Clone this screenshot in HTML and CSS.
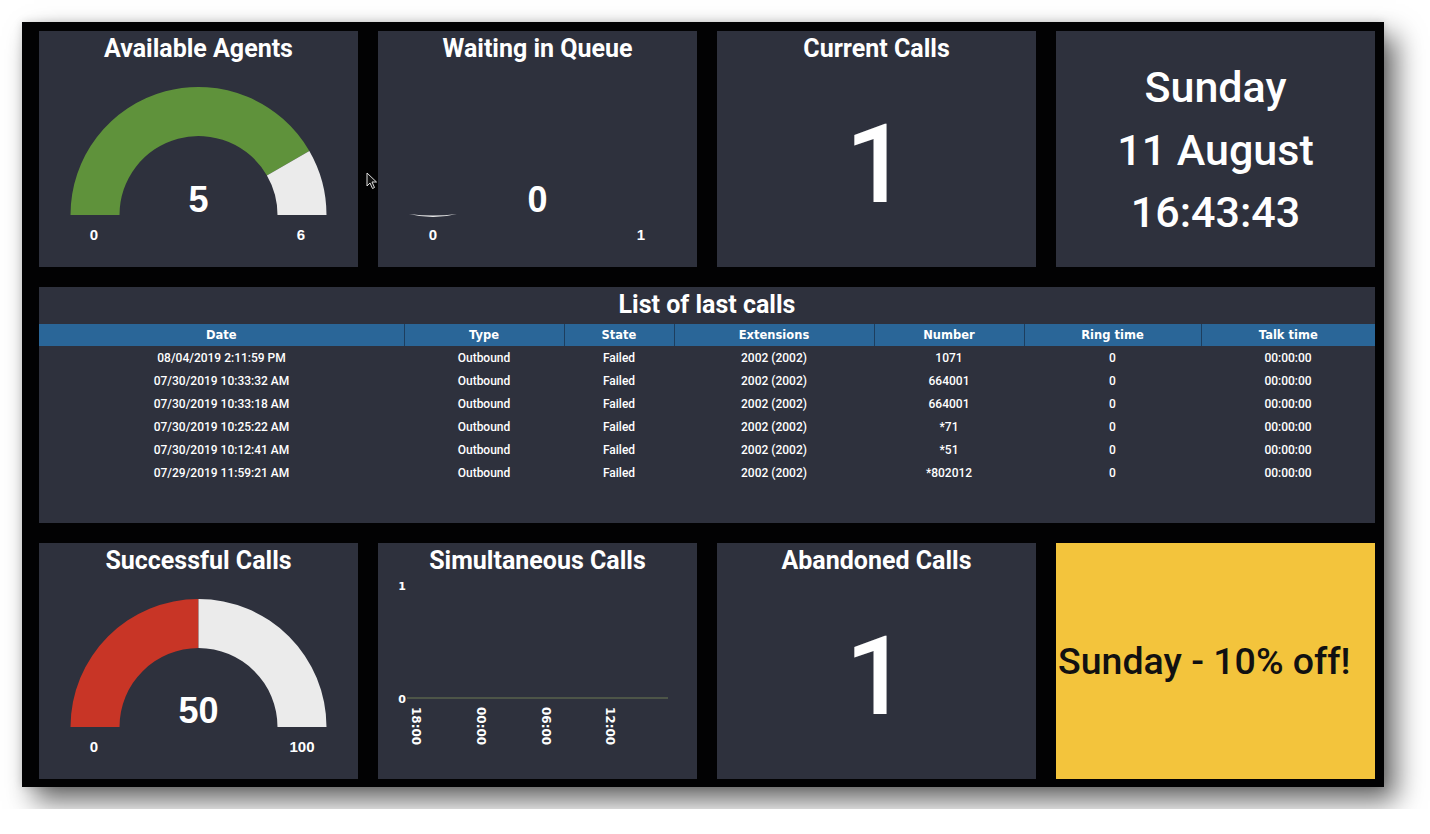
FILE: index.html
```html
<!DOCTYPE html>
<html lang="en">
<head>
<meta charset="utf-8">
<title>Call Center Dashboard</title>
<link rel="stylesheet" href="styles.css">
</head>
<body>
<div class="frame">
  <section class="panel">
    <h2 class="title">Available Agents</h2>
    <svg class="gauge" viewBox="0 0 319 202" width="319" height="202">
      <path class="g-green" d="M31.5 150 A128 128 0 0 1 270.35 86 L227.92 110.5 A79 79 0 0 0 80.5 150 Z"/>
      <path class="g-rest" d="M270.35 86 A128 128 0 0 1 287.5 150 L238.5 150 A79 79 0 0 0 227.92 110.5 Z"/>
      <text class="g-value" x="159.5" y="147">5</text>
      <text class="g-label" x="55" y="175">0</text>
      <text class="g-label" x="262" y="175">6</text>
    </svg>
  </section>
  <section class="panel">
    <h2 class="title">Waiting in Queue</h2>
    <svg class="gauge" viewBox="0 0 319 202" width="319" height="202">
      <path class="g-rest" d="M31 149 Q55 155 79 149 Q55 152 31 149 Z"/>
      <text class="g-value" x="159.5" y="147">0</text>
      <text class="g-label" x="55" y="175">0</text>
      <text class="g-label" x="263" y="175">1</text>
    </svg>
  </section>
  <section class="panel">
    <h2 class="title">Current Calls</h2>
    <div class="big">1</div>
  </section>
  <section class="panel clock">
    <div class="clock-line">Sunday</div>
    <div class="clock-line">11 August</div>
    <div class="clock-line">16:43:43</div>
  </section>

  <section class="panel wide">
    <h2 class="title table-title">List of last calls</h2>
    <table class="calls">
      <colgroup>
        <col style="width:365px"><col style="width:160px"><col style="width:110px"><col style="width:200px"><col style="width:150px"><col style="width:177px"><col style="width:174px">
      </colgroup>
      <thead>
        <tr><th>Date</th><th>Type</th><th>State</th><th>Extensions</th><th>Number</th><th>Ring time</th><th>Talk time</th></tr>
      </thead>
      <tbody>
        <tr><td>08/04/2019 2:11:59 PM</td><td>Outbound</td><td>Failed</td><td>2002 (2002)</td><td>1071</td><td>0</td><td>00:00:00</td></tr>
        <tr><td>07/30/2019 10:33:32 AM</td><td>Outbound</td><td>Failed</td><td>2002 (2002)</td><td>664001</td><td>0</td><td>00:00:00</td></tr>
        <tr><td>07/30/2019 10:33:18 AM</td><td>Outbound</td><td>Failed</td><td>2002 (2002)</td><td>664001</td><td>0</td><td>00:00:00</td></tr>
        <tr><td>07/30/2019 10:25:22 AM</td><td>Outbound</td><td>Failed</td><td>2002 (2002)</td><td>*71</td><td>0</td><td>00:00:00</td></tr>
        <tr><td>07/30/2019 10:12:41 AM</td><td>Outbound</td><td>Failed</td><td>2002 (2002)</td><td>*51</td><td>0</td><td>00:00:00</td></tr>
        <tr><td>07/29/2019 11:59:21 AM</td><td>Outbound</td><td>Failed</td><td>2002 (2002)</td><td>*802012</td><td>0</td><td>00:00:00</td></tr>
      </tbody>
    </table>
  </section>

  <section class="panel">
    <h2 class="title">Successful Calls</h2>
    <svg class="gauge" viewBox="0 0 319 202" width="319" height="202">
      <path class="g-red" d="M31.5 150 A128 128 0 0 1 159.5 22 L159.5 71 A79 79 0 0 0 80.5 150 Z"/>
      <path class="g-rest" d="M159.5 22 A128 128 0 0 1 287.5 150 L238.5 150 A79 79 0 0 0 159.5 71 Z"/>
      <text class="g-value" x="159.5" y="146">50</text>
      <text class="g-label" x="55" y="175">0</text>
      <text class="g-label" x="263" y="175">100</text>
    </svg>
  </section>
  <section class="panel">
    <h2 class="title">Simultaneous Calls</h2>
    <svg class="chart" viewBox="0 0 319 202" width="319" height="202">
      <text class="c-y" x="24" y="13">1</text>
      <text class="c-y" x="24" y="126">0</text>
      <line class="c-line" x1="29" y1="121" x2="290" y2="121"/>
      <text class="c-x" transform="translate(37 130) rotate(90)">18:00</text>
      <text class="c-x" transform="translate(102 130) rotate(90)">00:00</text>
      <text class="c-x" transform="translate(167 130) rotate(90)">06:00</text>
      <text class="c-x" transform="translate(231 130) rotate(90)">12:00</text>
    </svg>
  </section>
  <section class="panel">
    <h2 class="title">Abandoned Calls</h2>
    <div class="big">1</div>
  </section>
  <section class="panel promo">
    <div class="promo-text">Sunday - 10% off!</div>
  </section>

  <svg class="cursor" viewBox="0 0 12 18" width="12" height="18">
    <path d="M1 1 L1 14 L4 11 L6.5 16.5 L8.5 15.5 L6 10 L10.5 10 Z" fill="#111" stroke="#ddd" stroke-width="1"/>
  </svg>
</div>
</body>
</html>
```

FILE: styles.css
```css
* { box-sizing: border-box; }
html, body { margin: 0; padding: 0; background: #ffffff; }
body { padding: 22px; font-family: Roboto, "Liberation Sans", sans-serif; }

.frame {
  position: relative;
  width: 1362px;
  height: 765px;
  background: #020203;
  padding: 9px 9px 8px 17px;
  display: grid;
  grid-template-columns: repeat(4, 319px);
  grid-template-rows: repeat(3, 236px);
  gap: 20px;
  box-shadow: 12px 14px 26px rgba(0,0,0,0.6), 0 0 8px rgba(0,0,0,0.15);
}

.panel {
  background: #2e313d;
  color: #ffffff;
  display: flex;
  flex-direction: column;
  overflow: hidden;
}
.wide { grid-column: 1 / 5; }

.title {
  margin: 0;
  height: 34px;
  line-height: 36px;
  font-size: 25px;
  font-weight: 700;
  text-align: center;
  color: #ffffff;
  white-space: nowrap;
}
.table-title { height: 37px; flex: none; }

.gauge, .chart { display: block; flex: none; }
.g-green { fill: #5f923b; }
.g-red { fill: #c83526; }
.g-rest { fill: #ebebeb; }
.g-value {
  fill: #ffffff;
  font-family: "Liberation Sans", Arial, sans-serif;
  font-weight: 700;
  font-size: 36px;
  text-anchor: middle;
}
.g-label {
  fill: #ffffff;
  font-family: "Liberation Sans", Arial, sans-serif;
  font-weight: 700;
  font-size: 15px;
  text-anchor: middle;
}

.big {
  flex: 1;
  display: flex;
  align-items: center;
  justify-content: center;
  font-size: 110px;
  font-weight: 500;
  line-height: 1;
  padding-bottom: 2px;
}

.clock {
  justify-content: center;
  align-items: center;
  padding-top: 2px;
}
.clock-line {
  font-size: 43px;
  line-height: 62.5px;
  font-weight: 500;
}

.calls {
  width: 1336px;
  border-collapse: collapse;
  table-layout: fixed;
  color: #ffffff;
}
.calls th {
  background: #2a6698;
  height: 22px;
  padding: 0;
  font-family: "DejaVu Sans", Verdana, sans-serif;
  font-size: 11.5px;
  font-weight: 700;
  text-align: center;
  border-left: 1px solid #1d3e5e;
}
.calls th:first-child { border-left: none; }
.calls td {
  height: 23px;
  padding: 0;
  font-size: 12px;
  font-weight: 500;
  text-align: center;
  white-space: nowrap;
}

.c-y {
  fill: #ffffff;
  font-family: "DejaVu Sans", Verdana, sans-serif;
  font-weight: 700;
  font-size: 11px;
  text-anchor: middle;
}
.c-x {
  fill: #ffffff;
  font-family: "DejaVu Sans", Verdana, sans-serif;
  font-weight: 700;
  font-size: 12px;
  dominant-baseline: middle;
}
.c-line { stroke: #59624c; stroke-width: 1.5; }

.promo {
  background: #f3c43c;
  justify-content: center;
}
.promo-text {
  color: #111111;
  font-size: 37.5px;
  font-weight: 500;
  padding-left: 2px;
  white-space: nowrap;
}

.cursor {
  position: absolute;
  left: 344px;
  top: 150px;
}
```
